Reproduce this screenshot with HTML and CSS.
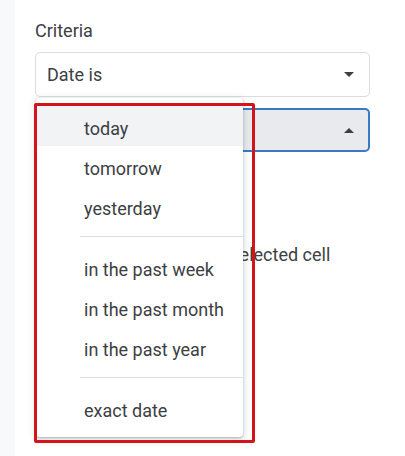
FILE: index.html
```html
<!DOCTYPE html>
<html lang="en">
<head>
<meta charset="utf-8">
<title>Criteria</title>
<link rel="stylesheet" href="styles.css">
</head>
<body>
<div class="app">
  <div class="rail"></div>
  <div class="panel">
    <div class="label">Criteria</div>
    <div class="select">
      <span class="select-text">Date is</span>
      <svg class="caret" width="10" height="5" viewBox="0 0 10 5"><path d="M0 0h10L5 5z"/></svg>
    </div>
    <div class="select select-open">
      <span class="select-text"></span>
      <svg class="caret" width="10" height="5" viewBox="0 0 10 5"><path d="M0 5h10L5 0z"/></svg>
    </div>
    <label class="check-row">
      <span class="checkbox"></span>
      <span class="check-text">Show help text for a selected cell</span>
    </label>
  </div>

  <div class="menu">
    <div class="item active">today</div>
    <div class="item">tomorrow</div>
    <div class="item">yesterday</div>
    <div class="sep"></div>
    <div class="item">in the past week</div>
    <div class="item">in the past month</div>
    <div class="item">in the past year</div>
    <div class="sep"></div>
    <div class="item">exact date</div>
  </div>
  <div class="highlight"></div>
</div>
</body>
</html>
```
FILE: styles.css
```css
html, body {
  margin: 0;
  padding: 0;
  background: #ffffff;
}
body {
  font-family: Roboto, "Liberation Sans", sans-serif;
  color: #3c4043;
  font-size: 18px;
  line-height: 20px;
}
.app {
  position: relative;
  display: flex;
  width: 405px;
  height: 456px;
  overflow: hidden;
}
.rail {
  width: 15px;
  flex: none;
  background: #f8f9fa;
}
.panel {
  flex: 1;
  padding: 21px 35px 0 20px;
  display: flex;
  flex-direction: column;
}
.label {
  height: 20px;
}
.select {
  margin-top: 11px;
  height: 43px;
  border: 1px solid #dadce0;
  border-radius: 5px;
  display: flex;
  align-items: center;
  padding: 0 15px 0 11px;
}
.select-text {
  flex: 1;
}
.caret {
  fill: #3c4043;
  display: block;
}
.select-open {
  height: 40px;
  border: 2px solid #3b78c6;
  background: #e8eaed;
  padding: 0 14px 0 10px;
}
.check-row {
  margin-top: 93px;
  display: flex;
  align-items: center;
  gap: 13px;
  padding-left: 1px;
}
.checkbox {
  width: 14px;
  height: 14px;
  border: 2px solid #5f6368;
  border-radius: 2px;
  flex: none;
}
.check-text {
  white-space: nowrap;
}
.menu {
  position: absolute;
  left: 36px;
  top: 98px;
  width: 207px;
  padding: 8px 0 9px;
  background: #ffffff;
  border-radius: 4px;
  box-shadow: 0 2px 6px 2px rgba(60, 64, 67, 0.15), 0 1px 2px rgba(60, 64, 67, 0.3);
}
.item {
  height: 40px;
  box-sizing: border-box;
  padding: 13px 0 7px 48px;
  white-space: nowrap;
}
.item.active {
  background: #f1f3f4;
}
.sep {
  height: 1px;
  margin: 10px 0 10px 44px;
  background: #dadce0;
}
.highlight {
  position: absolute;
  left: 34px;
  top: 103px;
  width: 215px;
  height: 334px;
  border: 3px solid #d3141c;
  border-radius: 2px;
}
```
